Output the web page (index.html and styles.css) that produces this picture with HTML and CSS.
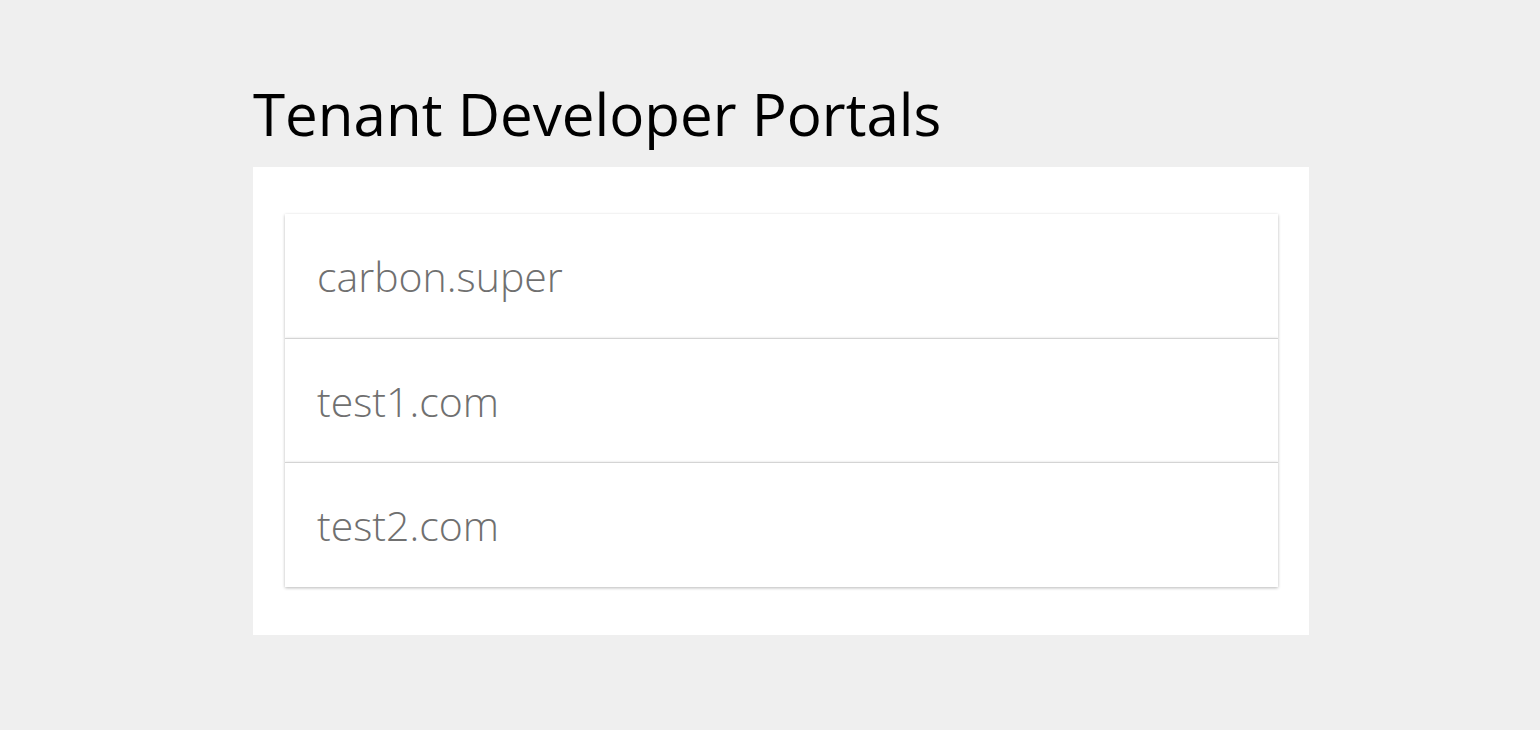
FILE: index.html
```html
<!DOCTYPE html>
<html lang="en">
<head>
  <meta charset="UTF-8">
  <meta name="viewport" content="width=device-width, initial-scale=1.0">
  <title>Tenant Developer Portals</title>

  <link rel="stylesheet" href="styles.css">
</head>
<body>
  <div class="content">
    <h1 class="page-title">Tenant Developer Portals</h1>

    <div class="tenant-card">
      <div class="tenant-list">
        <a class="tenant-item" href="#">carbon.super</a>
        <a class="tenant-item" href="#">test1.com</a>
        <a class="tenant-item" href="#">test2.com</a>
      </div>
    </div>
  </div>
</body>
</html>
```

FILE: styles.css
```css
body, html {
  margin: 0;
  height: 100%;
  background: #efefef;
  font-family: "Open Sans", Arial, sans-serif;
}
.content {
  width: 1056px;
  margin-left: 253px;
  padding-top: 76px;
}
.page-title {
  margin: 0 0 16px 0;
  font-size: 58.3px;
  font-weight: 400;
  line-height: 75px;
  color: #000;
}
.tenant-card {
  background: #fff;
  padding: 47px 31px 48px 32px;
}
.tenant-list {
  display: flex;
  flex-direction: column;
}
.tenant-item {
  display: flex;
  align-items: center;
  height: 124px;
  padding-left: 32px;
  background: #fff;
  box-shadow: 0 1px 3px rgba(0, 0, 0, 0.28);

  font-size: 41px;
  font-weight: 300;
  color: #707070;
  text-decoration: none;
}
.tenant-item + .tenant-item {
  height: 123px;
  border-top: solid 1px #d4d4d4;
}
.tenant-item:last-child {
  height: 124px;
}
```
